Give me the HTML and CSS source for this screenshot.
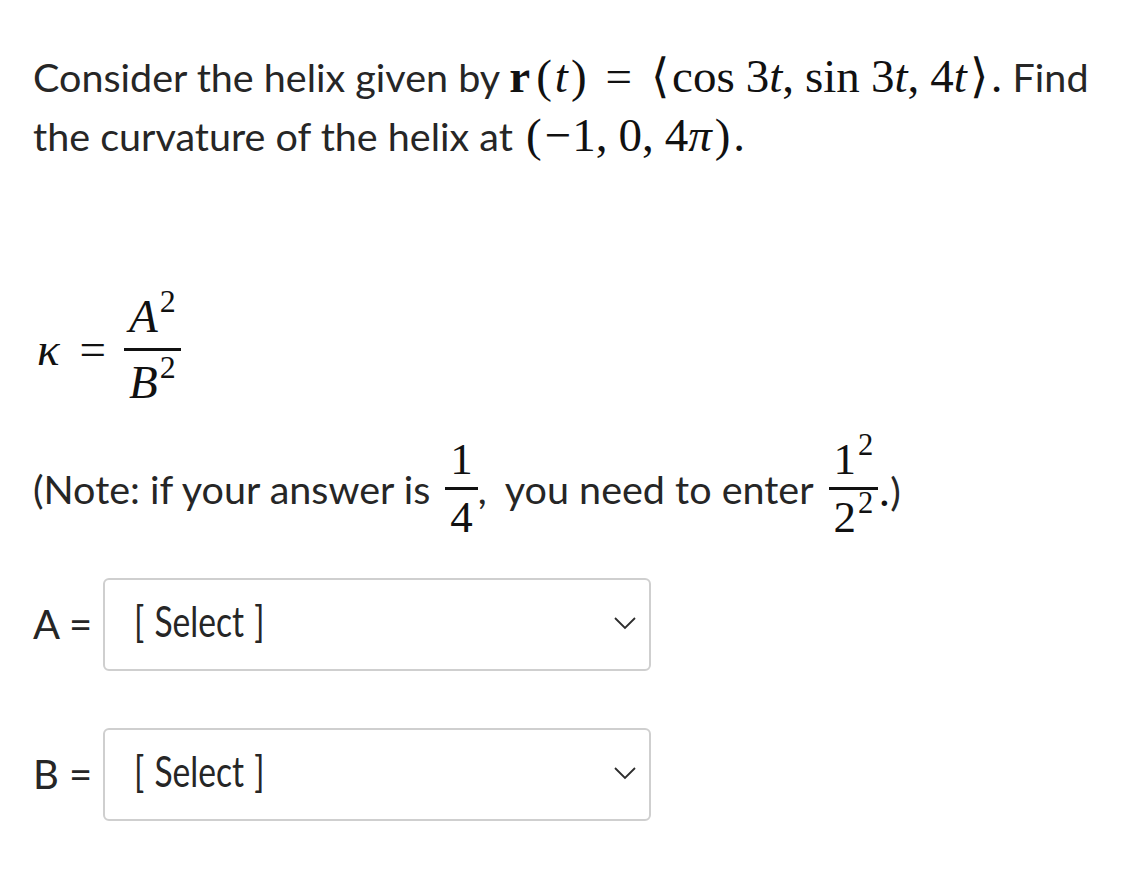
FILE: index.html
```html
<!DOCTYPE html>
<html>
<head>
<meta charset="utf-8">
<link rel="stylesheet" href="styles.css">
</head>
<body>
<div class="page">
  <p class="q">Consider the helix given by <span class="m"><b class="bf">r</b><span class="pa">(</span><i>t</i><span class="pa">)</span><span class="rel">=</span><span class="pa">⟨</span>cos<span class="th"></span>3<i>t</i>,<span class="th"></span>sin<span class="th"></span>3<i>t</i>,<span class="th"></span>4<i>t</i><span class="pa">⟩</span>.</span> Find the curvature of the helix at <span class="m"><span class="pa">(</span><span class="minus">−</span>1,<span class="th"></span>0,<span class="th"></span>4<i>π</i><span class="pa">)</span>.</span></p>

  <div class="kappa">
    <span class="m kv"><i>κ</i></span>
    <span class="m keq">=</span>
    <span class="frac m">
      <span class="num"><i>A</i><sup>2</sup></span>
      <span class="bar"></span>
      <span class="den"><i>B</i><sup>2</sup></span>
    </span>
  </div>

  <div class="note">
    <span>(Note: if your answer is</span>
    <span class="frac m small">
      <span class="num">1</span>
      <span class="bar"></span>
      <span class="den">4</span>
    </span>
    <span class="cm">,</span>
    <span>you need to enter</span>
    <span class="frac m small">
      <span class="num">1<sup>2</sup></span>
      <span class="bar"></span>
      <span class="den">2<sup>2</sup></span>
    </span>
    <span class="end"><span class="m">.</span>)</span>
  </div>

  <div class="field">
    <span class="lbl">A =</span>
    <div class="sel">
      <span class="seltext">[ Select ]</span>
      <svg class="chev" width="24" height="14" viewBox="0 0 24 14"><polyline points="2,2 12,12 22,2" fill="none" stroke="#2d2d2d" stroke-width="1.8"/></svg>
    </div>
  </div>

  <div class="field">
    <span class="lbl">B =</span>
    <div class="sel">
      <span class="seltext">[ Select ]</span>
      <svg class="chev" width="24" height="14" viewBox="0 0 24 14"><polyline points="2,2 12,12 22,2" fill="none" stroke="#2d2d2d" stroke-width="1.8"/></svg>
    </div>
  </div>
</div>
</body>
</html>
```

FILE: styles.css
```css
html, body {
  margin: 0;
  padding: 0;
  background: #ffffff;
}

.page {
  padding: 0 33px;
  font-family: Lato, "Open Sans", sans-serif;
  font-size: 39.5px;
  color: #262626;
}

.q {
  margin: 47px 0 0 0;
  line-height: 59px;
}

.m {
  font-family: "Liberation Serif", "Times New Roman", serif;
  font-size: 47px;
  color: #111;
}

.m i {
  font-style: italic;
}

.bf {
  font-weight: bold;
  margin-right: 3px;
}

.pa {
  margin: 0 3px;
}

.rel {
  margin: 0 16px;
}

.th {
  display: inline-block;
  width: 11px;
}

.minus {
  margin-right: 1px;
}

.kappa {
  display: flex;
  align-items: center;
  margin-top: 124px;
  height: 120px;
}

.kv {
  margin-left: 4px;
}

.keq {
  margin: 0 18px 0 20px;
}

.frac {
  display: inline-flex;
  flex-direction: column;
  align-items: center;
  line-height: 1;
}

.frac sup {
  font-size: 0.68em;
  vertical-align: 0.62em;
  line-height: 0;
  margin-left: 2px;
}

.frac .bar {
  align-self: stretch;
  height: 3px;
  background: #111;
  margin: 8px 0;
}

.frac .num, .frac .den {
  padding: 0 5px;
}

.note {
  display: flex;
  align-items: center;
  margin-top: 28px;
}

.small {
  font-size: 45px;
  margin: 0 0 0 15px;
}

.small .bar {
  margin: 5px 0;
  height: 2.5px;
}

.cm {
  margin-right: 18px;
}

.end {
  margin-left: 0;
  margin-top: 4px;
}

.field {
  display: flex;
  align-items: center;
  margin-top: 38px;
}

.field + .field {
  margin-top: 57px;
}

.lbl {
  width: 70px;
  font-size: 40px;
  white-space: nowrap;
}

.sel {
  box-sizing: border-box;
  width: 548px;
  height: 93px;
  border: 2px solid #cfcfcf;
  border-radius: 6px;
  display: flex;
  align-items: center;
  justify-content: space-between;
  padding: 0 12px 6px 29px;
}

.seltext {
  font-size: 42px;
  display: inline-block;
  transform: scaleX(0.8);
  transform-origin: left center;
  word-spacing: 2px;
  color: #262626;
}

.chev {
  margin-top: 4px;
}
```
